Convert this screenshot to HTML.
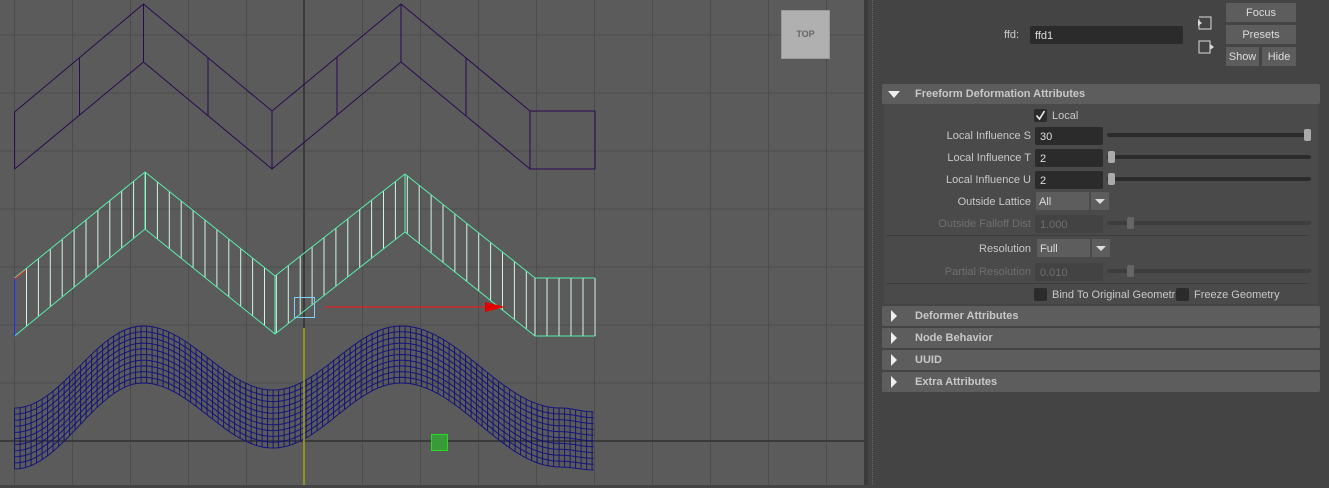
<!DOCTYPE html>
<html><head><meta charset="utf-8"><style>
*{margin:0;padding:0;box-sizing:border-box}
body{width:1329px;height:485px;overflow:hidden;background:#444;font-family:"Liberation Sans",sans-serif;font-size:11px;color:#c8c8c8;position:relative}
#vp{position:absolute;left:0;top:0;width:864px;height:485px;background:#5b5b5b}
.div1{position:absolute;left:864px;top:0;width:4px;height:485px;background:#3a3a3a}
.dots{position:absolute;left:872px;top:0;width:1px;height:485px;border-left:1px dotted #666}
.a{position:absolute;white-space:nowrap}
.fld{position:absolute;background:#2b2b2b;border-radius:2px;height:18px;padding-left:5px;line-height:20px;color:#ddd}
.btn{position:absolute;background:#5d5d5d;text-align:center;line-height:20px;height:19px;color:#ddd}
.hdr{position:absolute;left:882px;width:438px;height:20px;background:#5d5d5d;border-radius:2px;font-weight:bold;color:#c8c8c8;line-height:21px;padding-left:33px}
.tri{position:absolute;left:6px;top:6px;width:0;height:0}
.trd{border-left:6px solid transparent;border-right:6px solid transparent;border-top:7px solid #eee;left:6px;top:7px}
.trr{border-top:6px solid transparent;border-bottom:6px solid transparent;border-left:6px solid #eee;left:9px;top:4px}
.lbl{position:absolute;text-align:right;width:150px;left:881px}
.trk{position:absolute;left:1107px;width:204px;height:4px;background:#2b2b2b;border-radius:2px}
.thm{position:absolute;width:7px;height:12px;background:#aaa;border-radius:2px}
.dim{color:#6e6e6e}
.cb{position:absolute;width:13px;height:13px;background:#2b2b2b;border-radius:2px}
.sep{position:absolute;left:886px;width:422px;height:1px;background:#3c3c3c}
</style></head><body>
<div id="vp"><svg id="s" width="864" height="485" xmlns="http://www.w3.org/2000/svg"></svg></div>
<div class="a" style="left:781px;top:10px;width:49px;height:49px;background:#b0b0b0;border:1px solid #999;color:#666;font-weight:bold;font-size:9px;text-align:center;line-height:47px">TOP</div>
<div class="div1"></div><div class="dots"></div>

<div class="a" style="left:1004px;top:29px">ffd:</div>
<div class="fld" style="left:1030px;top:26px;width:153px">ffd1</div>
<svg class="a" style="left:1196px;top:14px" width="20" height="42"><path d="M3 3h12v12H3V10M3 5v3" fill="none" stroke="#ddd" stroke-width="1"/><path d="M2 6l4 3-4 3z" fill="#ddd"/><path d="M3 27h11v12H3z" fill="none" stroke="#ddd"/><path d="M14 30l4 3-4 3z" fill="#ddd"/></svg>
<div class="btn" style="left:1226px;top:3px;width:70px">Focus</div>
<div class="btn" style="left:1226px;top:25px;width:70px">Presets</div>
<div class="btn" style="left:1226px;top:47px;width:33px">Show</div>
<div class="btn" style="left:1262px;top:47px;width:34px">Hide</div>

<div class="hdr" style="top:84px"><span class="tri trd"></span>Freeform Deformation Attributes</div>
<div class="a" style="left:884px;top:104px;width:434px;height:200px;background:#4a4a4a"></div>
<div class="cb" style="left:1034px;top:109px"></div>
<svg class="a" style="left:1034px;top:109px" width="13" height="13"><path d="M2.5 6.5l3 3.5 5-8" fill="none" stroke="#eee" stroke-width="1.6"/></svg>
<div class="a" style="left:1052px;top:110px">Local</div>

<div class="lbl" style="top:130px">Local Influence S</div>
<div class="fld" style="left:1035px;top:127px;width:68px">30</div>
<div class="trk" style="top:133px"></div><div class="thm" style="left:1304px;top:129px"></div>
<div class="lbl" style="top:152px">Local Influence T</div>
<div class="fld" style="left:1035px;top:149px;width:68px">2</div>
<div class="trk" style="top:155px"></div><div class="thm" style="left:1108px;top:151px"></div>
<div class="lbl" style="top:174px">Local Influence U</div>
<div class="fld" style="left:1035px;top:171px;width:68px">2</div>
<div class="trk" style="top:177px"></div><div class="thm" style="left:1108px;top:173px"></div>

<div class="lbl" style="top:196px">Outside Lattice</div>
<div class="a" style="left:1036px;top:192px;width:53px;height:18px;background:#5d5d5d;padding-left:3px;line-height:20px;color:#ddd">All</div>
<div class="a" style="left:1091px;top:192px;width:18px;height:18px;background:#5d5d5d"></div><span class="a" style="left:1095px;top:199px;border-left:5px solid transparent;border-right:5px solid transparent;border-top:5px solid #ddd"></span>
<div class="lbl dim" style="top:218px">Outside Falloff Dist</div>
<div class="fld dim" style="left:1035px;top:215px;width:68px;background:#434343;color:#6e6e6e">1.000</div>
<div class="trk" style="top:221px;background:#3e3e3e"></div><div class="thm" style="left:1127px;top:217px;background:#666"></div>
<div class="sep" style="top:235px"></div>
<div class="lbl" style="top:243px">Resolution</div>
<div class="a" style="left:1037px;top:239px;width:53px;height:18px;background:#5d5d5d;padding-left:3px;line-height:20px;color:#ddd">Full</div>
<div class="a" style="left:1092px;top:239px;width:18px;height:18px;background:#5d5d5d"></div><span class="a" style="left:1096px;top:246px;border-left:5px solid transparent;border-right:5px solid transparent;border-top:5px solid #ddd"></span>
<div class="lbl dim" style="top:266px">Partial Resolution</div>
<div class="fld dim" style="left:1035px;top:263px;width:68px;background:#434343;color:#6e6e6e">0.010</div>
<div class="trk" style="top:269px;background:#3e3e3e"></div><div class="thm" style="left:1127px;top:265px;background:#666"></div>
<div class="sep" style="top:283px"></div>
<div class="cb" style="left:1034px;top:288px"></div>
<div class="a" style="left:1052px;top:289px;width:123px;overflow:hidden">Bind To Original Geometry</div>
<div class="cb" style="left:1176px;top:288px"></div>
<div class="a" style="left:1194px;top:289px">Freeze Geometry</div>

<div class="hdr" style="top:306px"><span class="tri trr"></span>Deformer Attributes</div>
<div class="hdr" style="top:328px"><span class="tri trr"></span>Node Behavior</div>
<div class="hdr" style="top:350px"><span class="tri trr"></span>UUID</div>
<div class="hdr" style="top:372px"><span class="tri trr"></span>Extra Attributes</div>

<script>
var s=document.getElementById('s'),h='';
function L(x1,y1,x2,y2,c,w){h+='<line x1="'+x1+'" y1="'+y1+'" x2="'+x2+'" y2="'+y2+'" stroke="'+c+'" stroke-width="'+(w||1)+'"/>';}
function P(pts,c,w){h+='<polyline fill="none" points="'+pts.map(function(p){return p[0].toFixed(1)+','+p[1].toFixed(1)}).join(' ')+'" stroke="'+c+'" stroke-width="'+(w||1)+'"/>';}
for(var x=14.5;x<864;x+=58)L(x,0,x,485,'#4c4c4c');
for(var y=441;y>0;y-=58)L(0,y,864,y,'#4c4c4c');
L(0,441,864,441,'#3a3a3a',2);L(304,0,304,485,'#3a3a3a',2);
function lin(k,x){for(var i=0;i<k.length-1;i++){if(x<=k[i+1][0]){var t=(x-k[i][0])/(k[i+1][0]-k[i][0]);return k[i][1]+t*(k[i+1][1]-k[i][1]);}}return k[k.length-1][1];}
var pc='#2a0a50',pt=[[14.6,112],[143.5,4],[272,111],[401,4],[530,111]],pb=[[14.6,169],[143.5,62],[272,169],[401,62],[530,169]];
P(pt,pc);P(pb,pc);[14.6,79.5,143.5,208,272,337,401,466].forEach(function(x){L(x,lin(pt,x),x,lin(pb,x),pc);});
h+='<rect x="530" y="111" width="65" height="58" fill="none" stroke="#2a0a50"/>';
var ct=[[14.6,278],[145,172],[275,276],[405,174],[535,278],[595,278]],cb=[[14.6,336],[145,229],[275,334],[405,232],[535,336],[595,336]];
for(var x=26.5;x<535;x+=11.9)L(x,lin(ct,x),x,lin(cb,x),'#d0f4e4');
[535,547,559,571,583,595].forEach(function(x){L(x,278,x,336,'#d8f4e8');});
L(145,172,145,229,'#60f0b0');L(405,174,405,232,'#60f0b0');L(275,276,275,334,'#60f0b0');
P(ct,'#55eea8');P(cb,'#55eea8');L(14.6,278,14.6,336,'#2030ff');L(14.6,279,26,270,'#ff2020');
function cs(k,x){for(var i=0;i<k.length-1;i++){if(x<=k[i+1][0]){var t=(x-k[i][0])/(k[i+1][0]-k[i][0]);t=(1-Math.cos(Math.PI*t))/2;return k[i][1]+t*(k[i+1][1]-k[i][1]);}}return k[k.length-1][1];}
var mt=[[14.6,408],[143,326],[273,390],[401,326],[560,408],[595,412]],mb=[[14.6,469],[143,383],[273,448],[401,383],[560,467],[595,470]];
var mc='#14147a';
for(var x=14.6;x<=596;x+=5.5)L(x,cs(mt,x),x,cs(mb,x),mc);
for(var r=0;r<=10;r++){var pts=[];for(var x=14.6;x<=595.5;x+=3){var a=cs(mt,x),b=cs(mb,x);pts.push([x,a+(b-a)*r/10]);}P(pts,mc);}
L(304,328,304,485,'#e8e800');
h+='<rect x="294.5" y="297.5" width="20" height="20" fill="none" stroke="#80d0ff"/>';
L(325,307,492,307,'#ff1010');h+='<polygon points="485,302 505,307 485,312" fill="#e00000"/>';
h+='<rect x="431.5" y="434.5" width="16" height="16" fill="#3a9a3a" stroke="#20e020"/>';
s.innerHTML=h;
</script>
</body></html>
